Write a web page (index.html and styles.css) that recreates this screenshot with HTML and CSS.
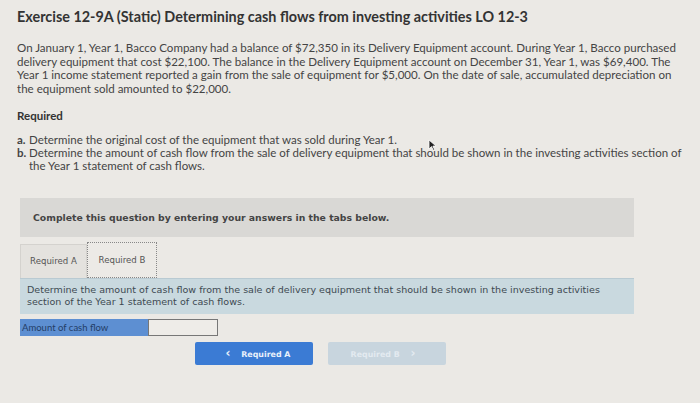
FILE: index.html
```html
<!DOCTYPE html>
<html lang="en">
<head>
    <meta charset="UTF-8">
    <title>Exercise 12-9A (Static)</title>
    <link rel="stylesheet" href="styles.css">
</head>
<body>
    <div class="page">
        <h1 class="title">Exercise 12-9A (Static) Determining cash flows from investing activities LO 12-3</h1>
        <p class="intro">On January 1, Year 1, Bacco Company had a balance of $72,350 in its Delivery Equipment account. During Year 1, Bacco purchased delivery equipment that cost $22,100. The balance in the Delivery Equipment account on December 31, Year 1, was $69,400. The Year 1 income statement reported a gain from the sale of equipment for $5,000. On the date of sale, accumulated depreciation on the equipment sold amounted to $22,000.</p>
        <h2 class="required">Required</h2>
        <ol class="parts">
            <li><span class="mark">a.</span><span>Determine the original cost of the equipment that was sold during Year 1.</span></li>
            <li><span class="mark">b.</span><span>Determine the amount of cash flow from the sale of delivery equipment that should be shown in the investing activities section of the Year 1 statement of cash flows.</span></li>
        </ol>

        <div class="work">
            <div class="instructions">Complete this question by entering your answers in the tabs below.</div>
            <div class="tabs">
                <div class="tab">Required A</div>
                <div class="tab active">Required B</div>
            </div>
            <div class="prompt">Determine the amount of cash flow from the sale of delivery equipment that should be shown in the investing activities section of the Year 1 statement of cash flows.</div>
            <div class="answer-row">
                <div class="answer-label">Amount of cash flow</div>
                <div class="answer-input"></div>
            </div>
            <div class="nav">
                <button class="nav-btn prev"><span class="chev">&lsaquo;</span> Required A</button>
                <button class="nav-btn next" disabled>Required B <span class="chev">&rsaquo;</span></button>
            </div>
        </div>

        <svg class="cursor" width="9" height="12" viewBox="0 0 9 12"><path d="M1 1 L1 10 L3.5 7.6 L5.3 11.3 L6.6 10.7 L4.9 7.1 L8 7 Z" fill="#222" stroke="#fff" stroke-width="0.8"/></svg>
    </div>
</body>
</html>
```
FILE: styles.css
```css
body {
    margin: 0;
    background-color: #ebe9e5;
    color: #3b3b3b;
    font-family: Lato, "Liberation Sans", sans-serif;
}
.page {
    position: relative;
    height: 403px;
    padding: 8px 17px 0;
    box-sizing: border-box;
    overflow: hidden;
}
.title {
    margin: 0;
    font-size: 14.4px;
    line-height: 17px;
    font-weight: bold;
    color: #333;
}
.intro {
    max-width: 662px;
    margin: 16px 0 0;
    font-size: 11.55px;
    line-height: 13.5px;
    color: #444;
}
.required {
    margin: 14px 0 0;
    font-size: 11.5px;
    line-height: 14px;
    font-weight: bold;
    color: #333;
}
.parts {
    list-style: none;
    margin: 10px 0 0;
    padding: 0;
    font-size: 11.5px;
    line-height: 13.2px;
    color: #444;
}
.parts li {
    display: flex;
}
.mark {
    flex: 0 0 12px;
    font-weight: bold;
}
.work {
    margin: 25px 0 0 3px;
    width: 614px;
    font-family: "DejaVu Sans", Verdana, sans-serif;
}
.instructions {
    background-color: #d9d8d5;
    height: 39px;
    padding: 0 13px;
    display: flex;
    align-items: center;
    font-size: 9.3px;
    font-weight: bold;
    color: #444;
}
.tabs {
    display: flex;
    align-items: flex-end;
    margin-top: 5px;
}
.tab {
    width: 67px;
    height: 34px;
    display: flex;
    align-items: center;
    justify-content: center;
    background-color: #e4e2de;
    border: 1px solid #d4d2ce;
    border-bottom: none;
    box-sizing: border-box;
    font-size: 8.6px;
    color: #555;
}
.tab.active {
    width: 70px;
    height: 36px;
    background-color: #eceae6;
    border: 1px dotted #888;
}
.prompt {
    background-color: #c9d9df;
    padding: 5px 7px 6px;
    font-size: 9.55px;
    line-height: 12px;
    color: #3e4a52;
    border-top: 1px solid #b9cad2;
}
.answer-row {
    display: flex;
    margin-top: 5px;
    height: 17px;
}
.answer-label {
    width: 128px;
    background-color: #5d8fd2;
    color: #233d66;
    font-family: Lato, "Liberation Sans", sans-serif;
    font-size: 9.5px;
    line-height: 17px;
    padding-left: 2px;
    box-sizing: border-box;
}
.answer-input {
    width: 70px;
    background-color: #eeece8;
    border: 1px solid #777;
    box-sizing: border-box;
}
.nav {
    display: flex;
    gap: 15px;
    margin: 6px 0 0 175px;
}
.nav-btn {
    width: 118px;
    height: 23px;
    border: none;
    border-radius: 2px;
    font-family: "DejaVu Sans", Verdana, sans-serif;
    font-size: 7.9px;
    font-weight: bold;
    cursor: pointer;
}
.nav-btn .chev {
    font-size: 12px;
    margin: 0 8px;
}
.prev {
    background-color: #3b7bd4;
    color: #e8f0fb;
}
.next {
    background-color: #c8d5de;
    color: #e3eaf0;
}
.cursor {
    position: absolute;
    left: 428px;
    top: 139px;
}
```
